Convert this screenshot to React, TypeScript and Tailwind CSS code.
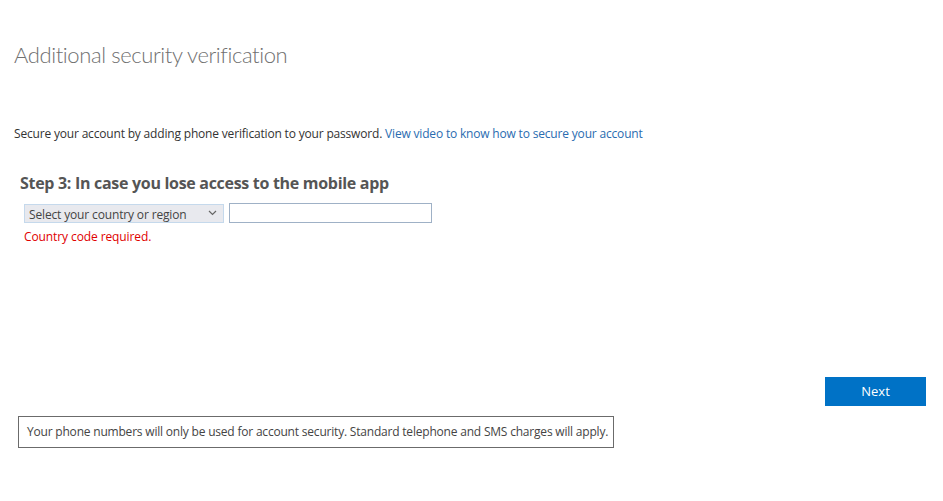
export default function App() {
  return (
    <div
      className="w-[943px] h-[501px] bg-white text-[#333] flex flex-col"
      style={{ fontFamily: '"Open Sans", "Noto Sans", sans-serif' }}
    >
      <h1 className="ml-[14px] mt-[40px] text-[22px] leading-[30px] font-light tracking-[-0.4px] text-[#707070] font-['Lato','Open_Sans',sans-serif]">
        Additional security verification
      </h1>

      <p className="ml-[14px] mt-[56px] text-[12px] leading-[16px] tracking-[-0.18px] whitespace-nowrap text-[#333]">
        Secure your account by adding phone verification to your password.{" "}
        <a href="#" className="text-[#2a6cb0]">
          View video to know how to secure your account
        </a>
      </p>

      <div className="ml-[20px] mt-[30px]">
        <h2 className="text-[16px] leading-[22px] font-bold tracking-[-0.3px] text-[#555]">
          Step 3: In case you lose access to the mobile app
        </h2>
        <div className="ml-[4px] mt-[9px] flex items-center gap-[5px]">
          <div className="w-[200px] h-[19px] bg-[#e8e9ee] border border-[#c5d9ec] flex items-center justify-between pl-[4px] pr-[6px] pt-[2px] text-[12px] leading-[15px] tracking-[-0.15px] text-[#444]">
            <span>Select your country or region</span>
            <svg width="9" height="6" viewBox="0 0 9 6" fill="none" className="-mt-[2px]">
              <path d="M1 1l3.5 3.5L8 1" stroke="#666" strokeWidth="1.2" />
            </svg>
          </div>
          <input
            type="text"
            className="w-[203px] h-[20px] border border-[#9fb1c6] outline-none"
          />
        </div>
        <p className="ml-[4px] mt-[6px] text-[12px] leading-[16px] tracking-[-0.1px] text-[#e00000]">
          Country code required.
        </p>
      </div>

      <div className="flex-1" />

      <div className="flex justify-end mr-[17px]">
        <button className="w-[101px] h-[29px] bg-[#0072c6] text-white text-[13px] pt-[1px]">
          Next
        </button>
      </div>

      <div className="ml-[18px] mt-[10px] mb-[53px] w-[596px] h-[32px] border border-[#6b6b6b] flex items-center pl-[8px] text-[12px] tracking-[-0.2px] whitespace-nowrap text-[#444]">
        Your phone numbers will only be used for account security. Standard
        telephone and SMS charges will apply.
      </div>
    </div>
  );
}
